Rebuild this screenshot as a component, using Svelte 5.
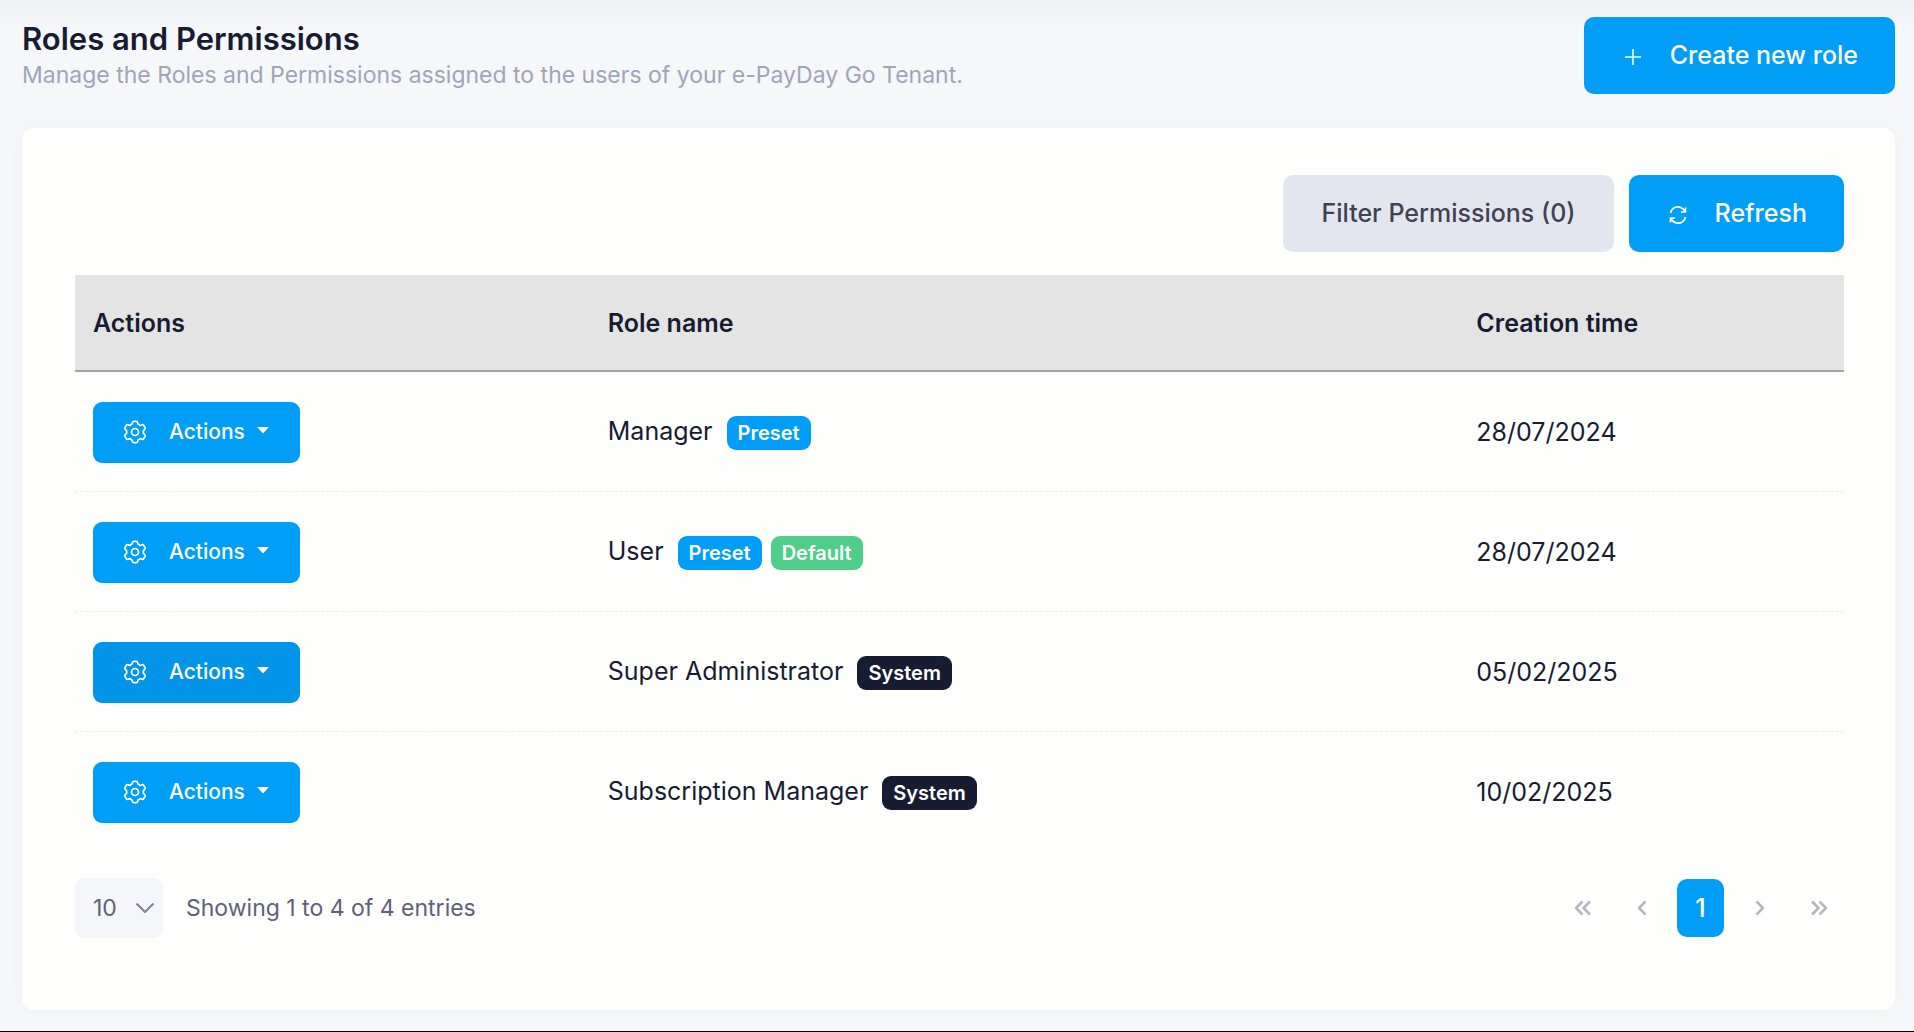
<script>
  const roles = [
    { name: 'Manager', tags: ['Preset'], created: '28/07/2024' },
    { name: 'User', tags: ['Preset', 'Default'], created: '28/07/2024' },
    { name: 'Super Administrator', tags: ['System'], created: '05/02/2025', active: true },
    { name: 'Subscription Manager', tags: ['System'], created: '10/02/2025' }
  ];
  let pageSize = $state('10');
</script>

<div class="page">
  <header>
    <div>
      <h1>Roles and Permissions</h1>
      <p>Manage the Roles and Permissions assigned to the users of your e-PayDay Go Tenant.</p>
    </div>
    <button class="btn primary create">
      <svg width="18" height="18" viewBox="0 0 18 18" aria-hidden="true"><path d="M9 1v16M1 9h16" /></svg>
      Create new role
    </button>
  </header>

  <main>
    <div class="toolbar">
      <button class="btn muted">Filter Permissions (0)</button>
      <button class="btn primary refresh">
        <svg width="18" height="20" viewBox="0 0 18 20" aria-hidden="true">
          <path d="M1.500 8C2.500 4 5.500 1.800 9 1.800c2.800 0 5 1.500 6.800 4.200M16.500 2.500v4.500H12M16.500 12c-1 4-4 6.200-7.500 6.200-2.800 0-5-1.500-6.800-4.200M1.500 17.500V13H6" />
        </svg>
        Refresh
      </button>
    </div>

    <table>
      <thead>
        <tr><th class="c-act">Actions</th><th class="c-name">Role name</th><th>Creation time</th></tr>
      </thead>
      <tbody>
        {#each roles as role}
          <tr>
            <td>
              <button class="actions" class:active={role.active}>
                <svg class="gear" width="24" height="24" viewBox="0 0 24 24" aria-hidden="true">
                  <path d="M11 1.300h2Q14.400 1.300 14.600 2.400L15 4 17.400 5.400 19.200 4.800Q20.200 4.500 20.800 5.500L22 7.600Q22.500 8.600 21.700 9.400L20.400 10.600V13.400L21.700 14.600Q22.500 15.400 22 16.400L20.800 18.500Q20.200 19.500 19.200 19.200L17.400 18.600 15 20 14.600 21.600Q14.400 22.700 13 22.700H11Q9.600 22.700 9.400 21.600L9 20 6.600 18.600 4.800 19.200Q3.800 19.500 3.200 18.500L2 16.400Q1.500 15.400 2.300 14.600L3.600 13.400V10.600L2.300 9.400Q1.500 8.600 2 7.600L3.200 5.500Q3.800 4.500 4.800 4.800L6.600 5.400 9 4 9.400 2.400Q9.600 1.300 11 1.300Z" />
                  <circle cx="12" cy="12" r="3.500" />
                </svg>
                <span>Actions</span>
                <svg class="caret" width="12" height="7" viewBox="0 0 12 7" aria-hidden="true"><path d="M0 0h12L6 6.500z" /></svg>
              </button>
            </td>
            <td>
              <div class="role">
                <span>{role.name}</span>
                <span class="tags">
                  {#each role.tags as tag}<span class="tag {tag.toLowerCase()}">{tag}</span>{/each}
                </span>
              </div>
            </td>
            <td>{role.created}</td>
          </tr>
        {/each}
      </tbody>
    </table>

    <footer>
      <div class="size">
        <select aria-label="Rows per page" bind:value={pageSize}>
          <option>10</option><option>25</option><option>50</option>
        </select>
        <svg width="20" height="12" viewBox="0 0 20 12" aria-hidden="true"><path d="M1.500 1.500 10 10l8.500-8.500" /></svg>
      </div>
      <span class="summary">Showing 1 to 4 of 4 entries</span>
      <nav aria-label="Pagination">
        <button aria-label="First page"><svg width="18" height="16" viewBox="0 0 18 16"><path d="M8.500 1.500 2 8l6.500 6.500M16 1.500 9.500 8l6.500 6.500" /></svg></button>
        <button aria-label="Previous page"><svg width="10" height="16" viewBox="0 0 10 16"><path d="M8.500 1.500 2 8l6.500 6.500" /></svg></button>
        <button class="current" aria-current="page">1</button>
        <button aria-label="Next page"><svg width="10" height="16" viewBox="0 0 10 16"><path d="M1.500 1.500 8 8l-6.500 6.500" /></svg></button>
        <button aria-label="Last page"><svg width="18" height="16" viewBox="0 0 18 16"><path d="M2 1.500 8.500 8 2 14.500M9.500 1.500 16 8l-6.500 6.500" /></svg></button>
      </nav>
    </footer>
  </main>
</div>

<style>
  :global(body) {
    background: #f5f7f9;
  }
  .page {
    box-sizing: border-box;
    min-height: 100vh;
    display: flex;
    flex-direction: column;
    padding: 17px 19px 21px 22px;
    border-bottom: 1px solid #000;
    background: linear-gradient(#eff0f5, #f5f7f9 30px);
    font-family: Inter, sans-serif;
    color: #181c32;
  }
  header {
    display: flex;
    justify-content: space-between;
    align-items: flex-start;
    gap: 24px;
    margin-bottom: 34px;
  }
  h1 {
    margin: 0;
    padding-top: 2px;
    font-size: 31px;
    line-height: 40px;
    font-weight: 600;
  }
  p {
    margin: 0;
    font-size: 23px;
    line-height: 32px;
    color: #a1a5b7;
  }
  button,
  select {
    font-family: inherit;
    border: 0;
    cursor: pointer;
  }
  svg {
    flex: none;
    fill: none;
    stroke: currentColor;
    stroke-width: 2;
    stroke-linejoin: round;
  }
  .btn {
    box-sizing: border-box;
    display: flex;
    align-items: center;
    height: 77px;
    padding: 0 38px 2px;
    border-radius: 10px;
    font-size: 25px;
    font-weight: 500;
    white-space: nowrap;
  }
  .btn svg {
    margin-top: 4px;
    stroke-width: 1.500;
  }
  .primary {
    background: #009ef7;
    color: #fff;
  }
  .muted {
    background: #e4e6ef;
    color: #3f4254;
  }
  .create,
  .refresh {
    padding-right: 37px;
    padding-left: 40px;
    gap: 28px;
  }
  .refresh svg {
    stroke-width: 1.700;
  }
  main {
    flex: 1;
    padding: 47px 51px 0 53px;
    border-radius: 12px;
    background: #fefefd;
    box-shadow: 0 0 20px rgba(76, 87, 125, 0.03);
  }
  .toolbar {
    display: flex;
    justify-content: flex-end;
    gap: 15px;
    margin-bottom: 23px;
  }
  table {
    width: 100%;
    border-collapse: collapse;
    table-layout: fixed;
    font-size: 25px;
  }
  .c-act {
    width: 29.100%;
  }
  .c-name {
    width: 49.100%;
  }
  th,
  td {
    box-sizing: border-box;
    padding: 0 18px;
  }
  th {
    height: 96px;
    background: #e4e4e5;
    border-bottom: 2px solid #a3a4a8;
    text-align: left;
    font-weight: 600;
  }
  td {
    height: 120px;
    padding-top: 2px;
    border-bottom: 1px dashed #e9ecf2;
  }
  tbody tr:last-child td {
    border-bottom: 0;
  }
  .actions {
    display: flex;
    align-items: center;
    height: 61px;
    padding: 0 31px 0 30px;
    border-radius: 9px;
    background: #009ef7;
    color: #fff;
    font-size: 21px;
    font-weight: 500;
  }
  .actions.active {
    background: #0095e8;
  }
  .actions span {
    padding-bottom: 2px;
  }
  .gear {
    margin-right: 22px;
    stroke-width: 1.700;
  }
  .caret {
    margin: 0 0 4px 12px;
    fill: currentColor;
    stroke: none;
  }
  .role {
    display: flex;
    align-items: baseline;
    gap: 14px;
    padding-top: 2px;
  }
  .tags {
    display: flex;
    gap: 9px;
  }
  .tag {
    padding: 0 11px;
    border-radius: 9px;
    color: #fff;
    font-size: 20px;
    line-height: 34px;
    font-weight: 600;
  }
  .preset {
    background: #009ef7;
  }
  .default {
    background: #50cd89;
  }
  .system {
    background: #181c32;
  }
  footer {
    display: flex;
    align-items: center;
    margin-top: 27px;
  }
  .size {
    display: grid;
    align-items: center;
  }
  .size > * {
    grid-area: 1 / 1;
  }
  .size svg {
    justify-self: end;
    margin-right: 8px;
    color: #7e8299;
    pointer-events: none;
  }
  select {
    width: 88px;
    height: 60px;
    padding: 0 18px;
    border-radius: 9px;
    appearance: none;
    background: #f5f6fa;
    color: #5e6278;
    font-size: 23px;
  }
  .summary {
    margin-left: 23px;
    font-size: 23px;
    color: #5e6278;
  }
  nav {
    display: flex;
    gap: 12px;
    margin: 0 2px 0 auto;
  }
  nav button {
    display: flex;
    align-items: center;
    justify-content: center;
    width: 47px;
    height: 58px;
    padding: 0;
    border-radius: 10px;
    background: none;
    color: #b5b5c3;
    font-size: 25px;
    font-weight: 500;
  }
  nav svg {
    stroke-width: 2.500;
  }
  nav .current {
    background: #009ef7;
    color: #fff;
  }
</style>
